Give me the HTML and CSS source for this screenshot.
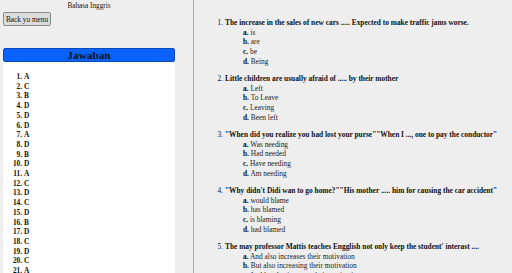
FILE: index.html
```html
<!DOCTYPE html>
<html>
  <head>
    <link rel="stylesheet" href="styles.css">
  </head>
  <body>
    <div class="page">
      <div class="sidebar">
        <div class="subject">Bahasa Inggris</div>
        <button type="button" class="backbtn">Back yo menu</button>

        <div class="answers">
          <h2>Jawaban</h2>
          <ol class="answer-list">
            <li>A</li>
            <li>C</li>
            <li>B</li>
            <li>D</li>
            <li>D</li>
            <li>D</li>
            <li>A</li>
            <li>D</li>
            <li>B</li>
            <li>D</li>
            <li>A</li>
            <li>C</li>
            <li>D</li>
            <li>C</li>
            <li>D</li>
            <li>B</li>
            <li>D</li>
            <li>C</li>
            <li>D</li>
            <li>C</li>
            <li>A</li>
          </ol>
        </div>
      </div>

      <div class="main">
        <ol class="questions">
          <li>
            <b>The increase in the sales of new cars ..... Expected to make traffic jams worse.</b>
            <div class="opt"><b>a.</b> is</div>
            <div class="opt"><b>b.</b> are</div>
            <div class="opt"><b>c.</b> be</div>
            <div class="opt"><b>d.</b> Being</div>
          </li>
          <li>
            <b>Little children are usually afraid of ..... by their mother</b>
            <div class="opt"><b>a.</b> Left</div>
            <div class="opt"><b>b.</b> To Leave</div>
            <div class="opt"><b>c.</b> Leaving</div>
            <div class="opt"><b>d.</b> Been left</div>
          </li>
          <li>
            <b>"When did you realize you had lost your purse""When I ..., one to pay the conductor"</b>
            <div class="opt"><b>a.</b> Was needing</div>
            <div class="opt"><b>b.</b> Had needed</div>
            <div class="opt"><b>c.</b> Have needing</div>
            <div class="opt"><b>d.</b> Am needing</div>
          </li>
          <li>
            <b>"Why didn't Didi wan to go home?""His mother ..... him for causing the car accident"</b>
            <div class="opt"><b>a.</b> would blame</div>
            <div class="opt"><b>b.</b> has blamed</div>
            <div class="opt"><b>c.</b> is blaming</div>
            <div class="opt"><b>d.</b> had blamed</div>
          </li>
          <li>
            <b>The may professor Mattis teaches Engglish not only keep the student' interast ....</b>
            <div class="opt"><b>a.</b> And also increases their motivation</div>
            <div class="opt"><b>b.</b> But also increasing their motivation</div>
            <div class="opt"><b>c.</b> And by also increase their motivation</div>
          </li>
        </ol>
      </div>
    </div>
  </body>
</html>
```

FILE: styles.css
```css
html,
body {
  margin: 0;
  height: 100%;
  overflow: hidden;
}
body {
  background: #eeeeee;
  font-family: "Liberation Serif", "Times New Roman", serif;
  font-size: 7.4px;
  line-height: 9.7px;
  color: #111;
}
.page {
  display: flex;
  height: 100%;
}
/* Left column with the answer key */
.sidebar {
  width: 193px;
  padding-left: 3px;
  box-sizing: border-box;
}
.subject {
  width: 172px;
  text-align: center;
  padding-top: 2px;
  height: 10px;
  font-size: 7.2px;
}
.backbtn {
  display: block;
  font-family: inherit;
  font-size: 7.3px;
  height: 14px;
  padding: 0 2px;
  margin: 0;
  background: #dcdcdc;
  border: 1px solid #8a8a8a;
  border-radius: 2px;
  color: #111;
}
.answers {
  width: 172px;
  margin-top: 22px;
  background: #fff;
  height: 400px;
}
.answers h2 {
  margin: 0;
  height: 14px;
  line-height: 13px;
  box-sizing: border-box;
  text-align: center;
  font-size: 11.3px;
  background: #0862fb;
  border: 1px solid #0a49b8;
  border-radius: 2px;
  color: #111;
}
.answer-list {
  margin: 10px 0 0 0;
  padding-left: 21px;
  font-weight: bold;
}
/* Right column with the questions */
.main {
  flex: 1;
  border-left: 1px solid #a8a8a8;
}
.questions {
  margin: 18px 0 0 0;
  padding-left: 31px;
}
.questions li {
  margin-bottom: 7.5px;
}
.questions li:nth-child(n+2) {
  margin-top: 0.5px;
}
.opt {
  padding-left: 18px;
  color: #222;
}
.opt b {
  color: #111;
}
```
